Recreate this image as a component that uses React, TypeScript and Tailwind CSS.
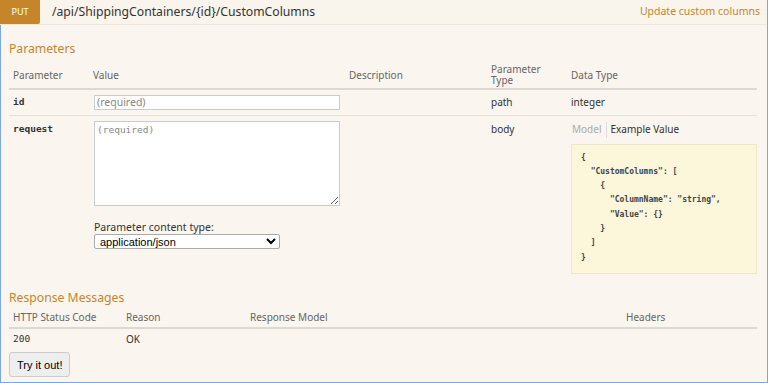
import React from "react";

const sans = { fontFamily: '"Noto Sans", "Open Sans", sans-serif' };
const mono = { fontFamily: '"DejaVu Sans Mono", "Liberation Mono", monospace' };
const arial = { fontFamily: '"Liberation Sans", Arial, sans-serif' };

export default function App() {
  const json = `{
  "CustomColumns": [
    {
      "ColumnName": "string",
      "Value": {}
    }
  ]
}`;
  return (
    <div
      className="w-[768px] h-[383px] overflow-hidden bg-[#faf5ee] border-r border-b border-[#7aa6e6] flex flex-col"
      style={sans}
    >
      {/* heading */}
      <div className="h-[25px] shrink-0 flex items-stretch bg-[#f9f4ec] border-b border-[#efe6d8]">
        <div className="w-[40px] h-[24px] bg-[#c5862b] rounded-br-[2px] text-white text-[9px] flex items-center justify-center">
          PUT
        </div>
        <div className="ml-[12px] flex items-center text-[12.2px] text-[#333]">
          /api/ShippingContainers/{"{id}"}/CustomColumns
        </div>
        <div className="ml-auto mr-[7px] flex items-center text-[10.5px] text-[#c5862b]">
          Update custom columns
        </div>
      </div>

      {/* content */}
      <div className="flex-1 border-l border-[#7aa6e6] pl-[8px] pr-[10px] pt-[14px]">
        <div className="text-[12.2px] leading-[20px] text-[#c5862b]">Parameters</div>
        <table className="table-fixed border-collapse w-[748px] mt-[3px] text-[10px] text-[#333]">
          <colgroup>
            <col className="w-[80px]" />
            <col className="w-[256px]" />
            <col className="w-[142px]" />
            <col className="w-[80px]" />
            <col className="w-[190px]" />
          </colgroup>
          <thead>
            <tr className="h-[27px] border-b-2 border-[#dcd8d2] text-[#666] text-left">
              <th className="font-normal pl-[4px] align-middle">Parameter</th>
              <th className="font-normal pl-[4px] align-middle">Value</th>
              <th className="font-normal pl-[4px] align-middle">Description</th>
              <th className="font-normal pl-[4px] align-middle">
                <div className="leading-[11.5px]">Parameter</div>
                <div className="leading-[11.5px]">Type</div>
              </th>
              <th className="font-normal pl-[4px] align-middle">Data Type</th>
            </tr>
          </thead>
          <tbody>
            <tr className="h-[26px] border-b border-[#e6e0d8]">
              <td className="pl-[4px] align-middle font-bold text-[9.5px]" style={mono}>
                id
              </td>
              <td className="pl-[5px] align-middle">
                <input
                  readOnly
                  placeholder="(required)"
                  className="block w-[246px] h-[15px] bg-white border border-[#ccc] px-[2px] text-[10.5px] leading-[13px] placeholder:text-[#888] outline-none"
                  style={sans}
                />
              </td>
              <td></td>
              <td className="pl-[4px] align-middle">path</td>
              <td className="pl-[4px] align-middle">integer</td>
            </tr>
            <tr className="align-top">
              <td className="pl-[4px] pt-[6px] font-bold text-[9.5px]" style={mono}>
                request
              </td>
              <td className="pl-[5px] pt-[5px]">
                <textarea
                  readOnly
                  placeholder="(required)"
                  className="block w-[246px] h-[85px] bg-white border border-[#ccc] px-[2px] py-[1px] text-[9.5px] leading-[14px] placeholder:text-[#888] outline-none resize-y"
                  style={mono}
                />
                <div className="mt-[15px] text-[10.5px] leading-[13px] text-[#333]">
                  Parameter content type:
                </div>
                <select
                  className="block w-[186px] h-[15px] bg-white border border-[#aaa] rounded-[2px] text-[11px] leading-[13px] text-black pl-[1px]"
                  style={arial}
                  defaultValue="application/json"
                >
                  <option>application/json</option>
                </select>
              </td>
              <td></td>
              <td className="pl-[4px] pt-[6px]">body</td>
              <td className="pl-[4px] pt-[6px]">
                <div className="flex items-center h-[16px] text-[10px]">
                  <span className="text-[#aaa] pl-[1px] pr-[4px]">Model</span>
                  <span className="w-px h-[16px] bg-[#ddd]" />
                  <span className="text-[#333] pl-[4px]">Example Value</span>
                </div>
                <pre
                  className="mt-[6px] w-[186px] h-[130px] bg-[#fcf6db] border border-[#efe8c8] pl-[9px] pt-[6px] text-[8px] leading-[14.3px] font-bold text-[#444]"
                  style={mono}
                >
                  {json}
                </pre>
              </td>
            </tr>
          </tbody>
        </table>

        <div className="mt-[14px] text-[12.2px] leading-[20px] text-[#c5862b]">Response Messages</div>
        <table className="table-fixed border-collapse w-[748px] text-[10px] text-[#333]">
          <colgroup>
            <col className="w-[113px]" />
            <col className="w-[124px]" />
            <col className="w-[376px]" />
            <col className="w-[135px]" />
          </colgroup>
          <thead>
            <tr className="h-[20px] border-b-2 border-[#dcd8d2] text-[#666] text-left">
              <th className="font-normal pl-[4px] align-bottom pb-[2px]">HTTP Status Code</th>
              <th className="font-normal pl-[4px] align-bottom pb-[2px]">Reason</th>
              <th className="font-normal pl-[4px] align-bottom pb-[2px]">Response Model</th>
              <th className="font-normal pl-[4px] align-bottom pb-[2px]">Headers</th>
            </tr>
          </thead>
          <tbody>
            <tr className="h-[23px]">
              <td className="pl-[4px] align-middle text-[9.5px]" style={mono}>
                200
              </td>
              <td className="pl-[4px] align-middle">OK</td>
              <td></td>
              <td></td>
            </tr>
          </tbody>
        </table>
        <button
          className="h-[25px] px-[7px] bg-[#eee] border border-[#ccc] rounded-[3px] text-[11px] text-black"
          style={arial}
        >
          Try it out!
        </button>
      </div>
    </div>
  );
}
